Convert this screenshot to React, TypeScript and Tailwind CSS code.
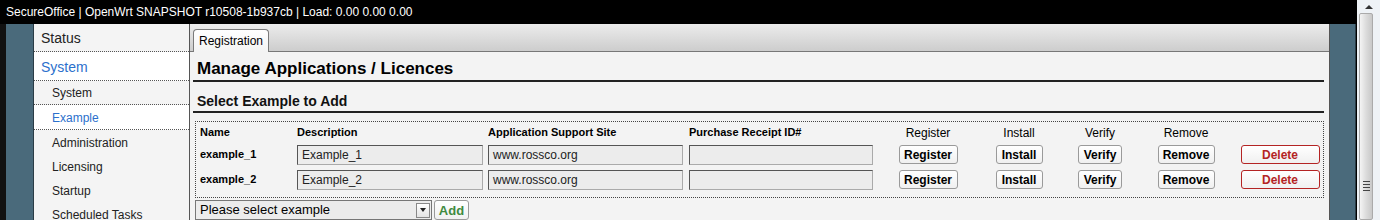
const font = 'font-["Liberation_Sans",Arial,sans-serif]';

const subItems = [
  { label: 'System', active: false, dotted: true, h: 'h-[24px]' },
  { label: 'Example', active: true, dotted: true, h: 'h-[25px]' },
  { label: 'Administration', active: false, dotted: false, h: 'h-[24px]' },
  { label: 'Licensing', active: false, dotted: false, h: 'h-[24px]' },
  { label: 'Startup', active: false, dotted: false, h: 'h-[24px]' },
  { label: 'Scheduled Tasks', active: false, dotted: false, h: 'h-[24px]' },
];

const rows = [
  { name: 'example_1', desc: 'Example_1', site: 'www.rossco.org' },
  { name: 'example_2', desc: 'Example_2', site: 'www.rossco.org' },
];

const grid = 'grid grid-cols-[98px_191px_201px_200px_84px_98px_64px_108px_80px]';

function Btn({ label, w, danger = false }: { label: string; w: string; danger?: boolean }) {
  return (
    <button
      className={`h-[19px] rounded-[3px] border bg-gradient-to-b from-white to-[#f0f0f0] px-[4px] text-[12px] leading-none font-bold ${w} ${
        danger ? 'border-[#b42424] text-[#b42424]' : 'border-[#9a9a9a] text-black'
      }`}
    >
      {label}
    </button>
  );
}

function Field({ value, w }: { value: string; w: string }) {
  return (
    <div
      className={`ml-[3px] flex h-[20px] items-center border border-t-[#555] border-l-[#555] border-r-[#aaa] border-b-[#aaa] bg-[#ececec] pl-[4px] text-[12px] text-[#222] ${w}`}
    >
      {value}
    </div>
  );
}

export default function App() {
  return (
    <div className={`flex h-[220px] w-[1380px] overflow-hidden bg-black ${font}`}>
      <div className="flex w-[1357px] flex-col">
        <div className="flex h-[24px] shrink-0 items-center pl-[6px] text-[12px] text-white">
          SecureOffice | OpenWrt SNAPSHOT r10508-1b937cb | Load: 0.00 0.00 0.00
        </div>
        <div className="flex flex-1">
          <div className="w-[6px] bg-[#111]" />
          <div className="w-[28px] border-r border-[#2a3c46] bg-[#4a6a7b]" />
          {/* sidebar */}
          <div className="flex w-[156px] flex-col border-r border-[#555] bg-[#f4f4f4]">
            <div className="flex h-[28px] shrink-0 items-center border-b border-dotted border-[#555] pt-[2px] pl-[7px] text-[14px] text-[#222]">
              Status
            </div>
            <div className="flex h-[29px] shrink-0 items-center border-b border-dotted border-[#555] bg-white pt-[2px] pl-[7px] text-[14px] text-[#2b70cc]">
              System
            </div>
            {subItems.map((it) => (
              <div
                key={it.label}
                className={`flex shrink-0 items-center pt-[1px] pl-[18px] text-[12px] ${it.h} ${
                  it.active ? 'bg-white text-[#2b70cc]' : 'text-[#222]'
                } ${it.dotted ? 'border-b border-dotted border-[#555]' : ''}`}
              >
                {it.label}
              </div>
            ))}
          </div>
          {/* content */}
          <div className="flex w-[1140px] flex-col border-r border-[#555] bg-[#f3f3f3]">
            <div className="flex h-[28px] shrink-0 items-end border-b border-[#777] bg-gradient-to-b from-[#ececec] to-[#cdcdcd] pl-[3px]">
              <div className="-mb-px flex h-[23px] w-[76px] items-center justify-center rounded-t-[4px] border border-b-0 border-[#7a7a7a] bg-gradient-to-b from-white to-[#f3f3f3] text-[12px] text-black">
                Registration
              </div>
            </div>
            <div className="flex flex-col pr-[5px] pl-[3px]">
              <div className="flex h-[30px] items-end border-b-2 border-[#222] pb-[3px] pl-[4px] text-[17px] leading-none font-bold text-black">
                Manage Applications / Licences
              </div>
              <div className="flex h-[31px] items-end border-b-2 border-[#222] pb-[3px] pl-[4px] text-[14px] leading-none font-bold text-[#111]">
                Select Example to Add
              </div>
              <div className="mt-[8px] ml-[2px] flex h-[77px] flex-col border border-dotted border-[#444] pt-[1px]">
                <div className={`${grid} h-[19px] items-center text-[11px] text-black`}>
                  <div className="pl-[4px] font-bold">Name</div>
                  <div className="pl-[3px] font-bold">Description</div>
                  <div className="pl-[3px] font-bold">Application Support Site</div>
                  <div className="pl-[3px] font-bold">Purchase Receipt ID#</div>
                  <div className="text-center text-[12px]">Register</div>
                  <div className="text-center text-[12px]">Install</div>
                  <div className="text-center text-[12px]">Verify</div>
                  <div className="text-center text-[12px]">Remove</div>
                  <div />
                </div>
                {rows.map((r) => (
                  <div key={r.name} className={`${grid} h-[25px] items-center`}>
                    <div className="pl-[4px] text-[11px] font-bold text-black">{r.name}</div>
                    <Field value={r.desc} w="w-[186px]" />
                    <Field value={r.site} w="w-[195px]" />
                    <Field value="" w="w-[184px]" />
                    <div className="flex justify-center">
                      <Btn label="Register" w="w-[59px]" />
                    </div>
                    <div className="flex justify-center">
                      <Btn label="Install" w="w-[47px]" />
                    </div>
                    <div className="flex justify-center">
                      <Btn label="Verify" w="w-[44px]" />
                    </div>
                    <div className="flex justify-center">
                      <Btn label="Remove" w="w-[57px]" />
                    </div>
                    <div className="flex justify-center">
                      <Btn label="Delete" w="w-[79px]" danger />
                    </div>
                  </div>
                ))}
              </div>
              <div className="mt-[2px] ml-[2px] flex items-center gap-[2px]">
                <div className="flex h-[20px] w-[237px] items-center border border-[#777] bg-[#ececec] pl-[4px] text-[13px] text-black">
                  <span className="flex-1">Please select example</span>
                  <span className="mr-[1px] flex h-[15px] w-[14px] items-center justify-center border border-[#888] bg-gradient-to-b from-white to-[#e4e4e4]">
                    <span className="h-0 w-0 border-x-[3.5px] border-t-[4px] border-x-transparent border-t-[#222]" />
                  </span>
                </div>
                <button className="h-[20px] w-[35px] rounded-[3px] border border-[#9a9a9a] bg-gradient-to-b from-white to-[#f0f0f0] text-[13px] leading-none font-bold text-[#3f8a3f]">
                  Add
                </button>
              </div>
            </div>
          </div>
          <div className="w-[26px] border-r border-[#2a3c46] bg-[#4a6a7b]" />
        </div>
      </div>
      {/* scrollbar */}
      <div className="flex w-[23px] flex-col bg-[#eef2f6]">
        <div className="flex h-[14px] items-center justify-center">
          <div className="h-0 w-0 border-x-[4px] border-b-[4px] border-x-transparent border-b-[#333]" />
        </div>
        <div className="ml-[2px] flex h-full w-[14px] flex-col items-center justify-end rounded-[2px] border border-[#aaa] bg-gradient-to-r from-[#f4f4f4] via-[#dcdcdc] to-[#c8c8c8] pb-[28px]">
          <div className="flex flex-col gap-[2px]">
            <div className="h-px w-[7px] bg-[#444]" />
            <div className="h-px w-[7px] bg-[#444]" />
            <div className="h-px w-[7px] bg-[#444]" />
            <div className="h-px w-[7px] bg-[#444]" />
          </div>
        </div>
      </div>
    </div>
  );
}
